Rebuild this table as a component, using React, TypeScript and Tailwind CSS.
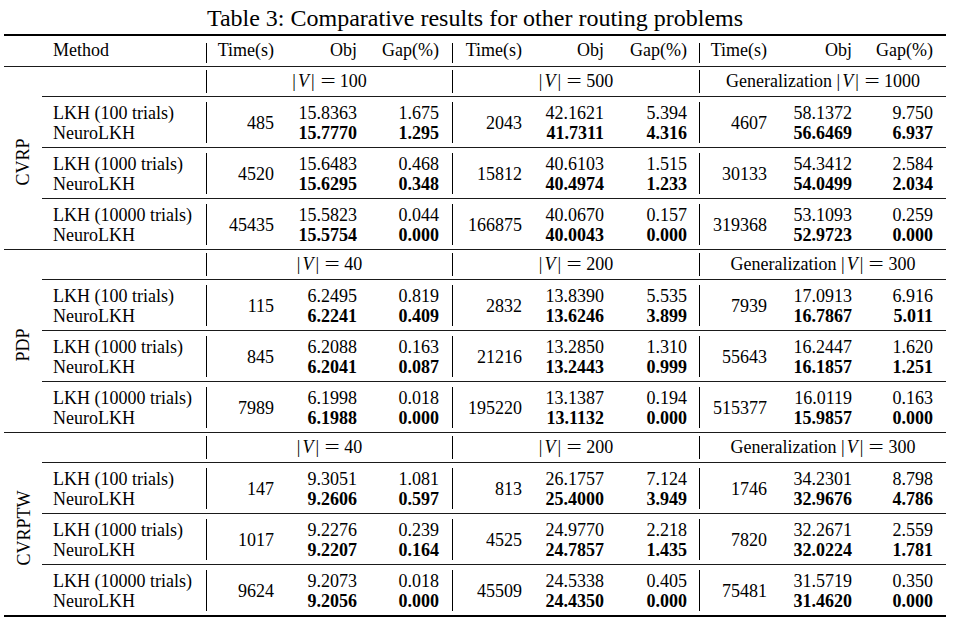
// Table 3 — comparative results for other routing problems (LKH vs NeuroLKH).
// Booktabs-style table: thick top/bottom rules, full-width midrules between
// problem sections, cmidrules under the size row and between trial blocks.

type Group = { time: string; obj: [string, string]; gap: [string, string] }
type Block = { trials: string; groups: Group[] }
type Section = { name: string; sizes: [string, string, string]; blocks: Block[] }

// per group: total width, then time / obj / gap column widths (right-aligned)
const COLS = [
  { w: 'w-[245px]', t: 'w-[67px]', o: 'w-[83px]', g: 'w-[82px]' },
  { w: 'w-[246px]', t: 'w-[69px]', o: 'w-[82px]', g: 'w-[83px]' },
  { w: 'w-[246px]', t: 'w-[67px]', o: 'w-[85px]', g: 'w-[81px]' },
]

const SECTIONS: Section[] = [
  {
    name: 'CVRP',
    sizes: ['100', '500', '1000'],
    blocks: [
      {
        trials: '100',
        groups: [
          { time: '485', obj: ['15.8363', '15.7770'], gap: ['1.675', '1.295'] },
          { time: '2043', obj: ['42.1621', '41.7311'], gap: ['5.394', '4.316'] },
          { time: '4607', obj: ['58.1372', '56.6469'], gap: ['9.750', '6.937'] },
        ],
      },
      {
        trials: '1000',
        groups: [
          { time: '4520', obj: ['15.6483', '15.6295'], gap: ['0.468', '0.348'] },
          { time: '15812', obj: ['40.6103', '40.4974'], gap: ['1.515', '1.233'] },
          { time: '30133', obj: ['54.3412', '54.0499'], gap: ['2.584', '2.034'] },
        ],
      },
      {
        trials: '10000',
        groups: [
          { time: '45435', obj: ['15.5823', '15.5754'], gap: ['0.044', '0.000'] },
          { time: '166875', obj: ['40.0670', '40.0043'], gap: ['0.157', '0.000'] },
          { time: '319368', obj: ['53.1093', '52.9723'], gap: ['0.259', '0.000'] },
        ],
      },
    ],
  },
  {
    name: 'PDP',
    sizes: ['40', '200', '300'],
    blocks: [
      {
        trials: '100',
        groups: [
          { time: '115', obj: ['6.2495', '6.2241'], gap: ['0.819', '0.409'] },
          { time: '2832', obj: ['13.8390', '13.6246'], gap: ['5.535', '3.899'] },
          { time: '7939', obj: ['17.0913', '16.7867'], gap: ['6.916', '5.011'] },
        ],
      },
      {
        trials: '1000',
        groups: [
          { time: '845', obj: ['6.2088', '6.2041'], gap: ['0.163', '0.087'] },
          { time: '21216', obj: ['13.2850', '13.2443'], gap: ['1.310', '0.999'] },
          { time: '55643', obj: ['16.2447', '16.1857'], gap: ['1.620', '1.251'] },
        ],
      },
      {
        trials: '10000',
        groups: [
          { time: '7989', obj: ['6.1998', '6.1988'], gap: ['0.018', '0.000'] },
          { time: '195220', obj: ['13.1387', '13.1132'], gap: ['0.194', '0.000'] },
          { time: '515377', obj: ['16.0119', '15.9857'], gap: ['0.163', '0.000'] },
        ],
      },
    ],
  },
  {
    name: 'CVRPTW',
    sizes: ['40', '200', '300'],
    blocks: [
      {
        trials: '100',
        groups: [
          { time: '147', obj: ['9.3051', '9.2606'], gap: ['1.081', '0.597'] },
          { time: '813', obj: ['26.1757', '25.4000'], gap: ['7.124', '3.949'] },
          { time: '1746', obj: ['34.2301', '32.9676'], gap: ['8.798', '4.786'] },
        ],
      },
      {
        trials: '1000',
        groups: [
          { time: '1017', obj: ['9.2276', '9.2207'], gap: ['0.239', '0.164'] },
          { time: '4525', obj: ['24.9770', '24.7857'], gap: ['2.218', '1.435'] },
          { time: '7820', obj: ['32.2671', '32.0224'], gap: ['2.559', '1.781'] },
        ],
      },
      {
        trials: '10000',
        groups: [
          { time: '9624', obj: ['9.2073', '9.2056'], gap: ['0.018', '0.000'] },
          { time: '45509', obj: ['24.5338', '24.4350'], gap: ['0.405', '0.000'] },
          { time: '75481', obj: ['31.5719', '31.4620'], gap: ['0.350', '0.000'] },
        ],
      },
    ],
  },
]

function Bar({ className }: { className: string }) {
  return <div className={`w-px shrink-0 bg-black ${className}`} />
}

// |V| = n, spaced like LaTeX math (wider "=" than the text font's)
function SizeLabel({ n, general }: { n: string; general?: boolean }) {
  return (
    <span className="whitespace-nowrap">
      {general && 'Generalization '}
      |<i className="px-[2px]">V</i>|
      <span className="ml-[8px] mr-[7px] inline-block scale-x-[1.5]">=</span>
      {n}
    </span>
  )
}

function HeaderRow() {
  return (
    <div className="flex h-[30px] leading-[20px]">
      <div className="w-[38px] shrink-0" />
      <div className="w-[164px] shrink-0 pl-[11px] pt-[4px]">Method</div>
      {COLS.map((c, i) => (
        <div key={i} className="flex">
          <Bar className="mt-[7px] mb-[3px]" />
          <div className={`flex pt-[4px] ${c.w}`}>
            <div className={`text-right ${c.t}`}>Time(s)</div>
            <div className={`text-right ${c.o}`}>Obj</div>
            <div className={`text-right ${c.g}`}>Gap(%)</div>
          </div>
        </div>
      ))}
    </div>
  )
}

function SizeRow({ sizes }: { sizes: [string, string, string] }) {
  return (
    <div className="flex h-[29px] leading-[20px]">
      <div className="w-[164px] shrink-0" />
      {COLS.map((c, i) => (
        <div key={i} className="flex">
          <Bar className="my-[3px]" />
          <div className={`pt-[4px] text-center ${c.w}`}>
            <SizeLabel n={sizes[i]} general={i === 2} />
          </div>
        </div>
      ))}
    </div>
  )
}

function BlockRow({ block }: { block: Block }) {
  return (
    <div className="flex h-[50px] leading-[20px]">
      <div className="w-[164px] shrink-0 pl-[11px] pt-[6px]">
        <div className="whitespace-nowrap">LKH ({block.trials} trials)</div>
        <div>NeuroLKH</div>
      </div>
      {block.groups.map((g, i) => (
        <div key={i} className="flex">
          <Bar className="mt-[5px] mb-[4px]" />
          <div className={`flex pt-[6px] pb-[4px] ${COLS[i].w}`}>
            <div className={`flex items-center justify-end ${COLS[i].t}`}>{g.time}</div>
            <div className={`text-right ${COLS[i].o}`}>
              <div>{g.obj[0]}</div>
              <div className="font-bold">{g.obj[1]}</div>
            </div>
            <div className={`text-right ${COLS[i].g}`}>
              <div>{g.gap[0]}</div>
              <div className="font-bold">{g.gap[1]}</div>
            </div>
          </div>
        </div>
      ))}
    </div>
  )
}

function SectionRows({ section }: { section: Section }) {
  return (
    <div className="flex">
      <div className="flex w-[38px] shrink-0 items-center justify-center pt-[8px]">
        <span className="-rotate-90 whitespace-nowrap leading-[20px]">{section.name}</span>
      </div>
      <div className="flex w-[904px] flex-col">
        <SizeRow sizes={section.sizes} />
        {section.blocks.map((b, i) => (
          <div key={i}>
            <div className="h-px bg-[#1a1a1a]" />
            <BlockRow block={b} />
          </div>
        ))}
      </div>
    </div>
  )
}

export default function App() {
  return (
    <div className="min-h-[627px] w-[956px] bg-white font-['Liberation_Serif',serif] text-[18px] text-black">
      <div className="ml-[4px] w-[942px]">
        <h1 className="pt-[5px] pb-[2px] text-center text-[24px] leading-[27px]">
          Table 3: Comparative results for other routing problems
        </h1>
        <div className="h-[2px] bg-black" />
        <HeaderRow />
        {SECTIONS.map((s, i) => (
          <div key={s.name}>
            <div className="h-px bg-[#1a1a1a]" />
            <SectionRows section={s} />
            {i === SECTIONS.length - 1 && <div className="h-[2px] bg-black" />}
          </div>
        ))}
      </div>
    </div>
  )
}
